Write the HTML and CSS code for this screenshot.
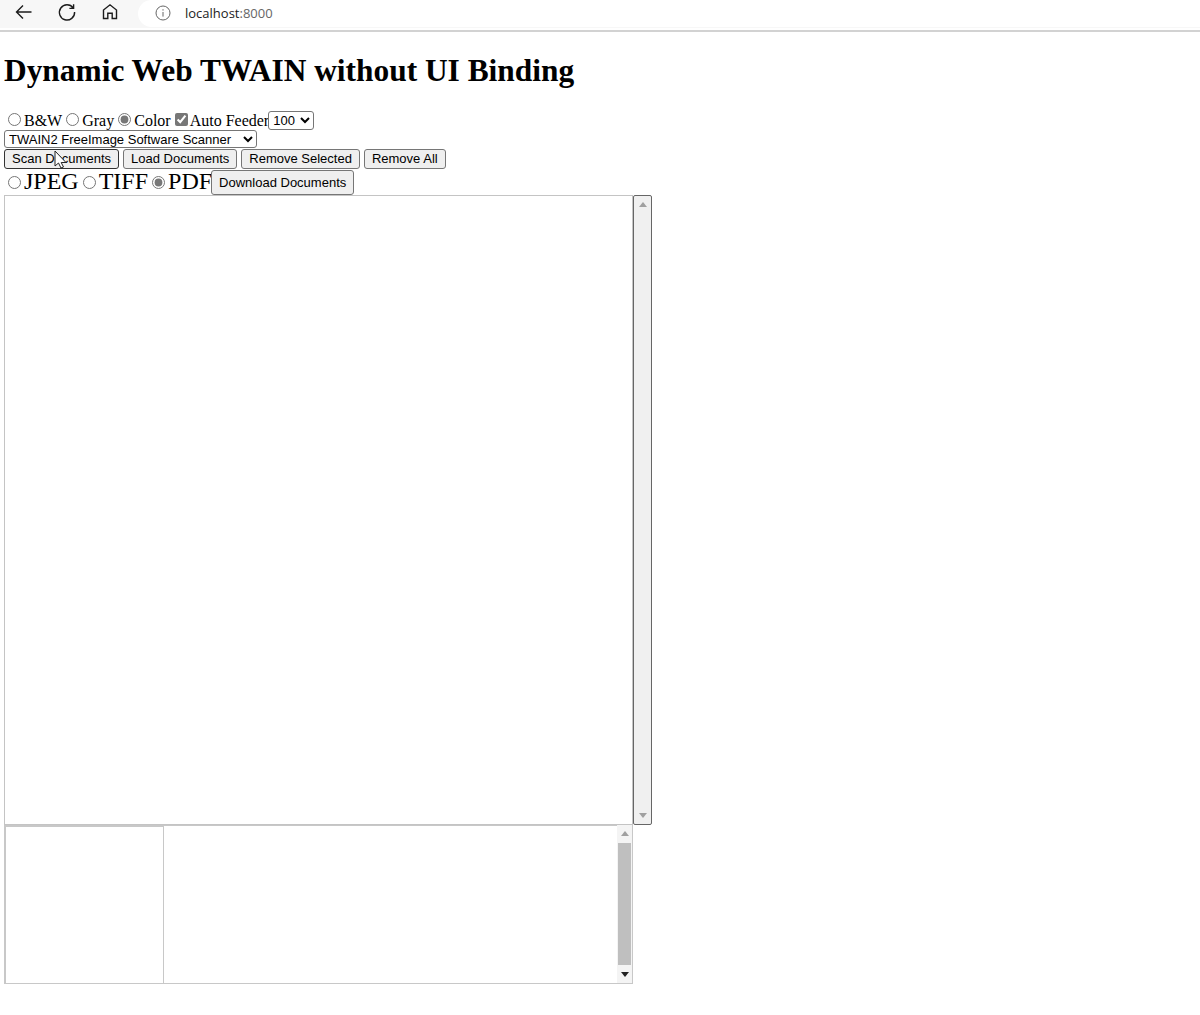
FILE: index.html
```html
<!DOCTYPE html>
<html lang="en">
<head>
<meta charset="utf-8">
<title>Dynamic Web TWAIN without UI Binding</title>
<link rel="stylesheet" href="styles.css">
</head>
<body>
<header class="browser-bar">
  <svg class="nav-icon back" viewBox="0 0 20 20"><path d="M17.5 10H2.5M9 3.5 2.5 10 9 16.5"/></svg>
  <svg class="nav-icon reload" viewBox="0 0 20 20"><path d="M16.2 6A7.6 7.6 0 1 0 17.6 10M16.6 2.2V6.4H12.4"/></svg>
  <svg class="nav-icon home" viewBox="0 0 20 20"><path d="M3.5 16.5V8L10 2.8 16.5 8V16.5H12.2V11.2H7.8V16.5Z"/></svg>
  <div class="address">
    <svg class="info" viewBox="0 0 16 16"><circle cx="8" cy="8" r="7"/><path d="M8 7v4.6M8 4.2v1.4"/></svg>
    <span class="host">localhost</span><span class="port">:8000</span>
  </div>
</header>
<main class="page">
  <h1>Dynamic Web TWAIN without UI Binding</h1>
  <div class="row options">
    <label><input type="radio" name="mode">B&amp;W</label>
    <label><input type="radio" name="mode">Gray</label>
    <label><input type="radio" name="mode" checked>Color</label>
    <label class="feeder"><input type="checkbox" checked>Auto Feeder</label><select class="count"><option>100</option></select>
  </div>
  <div class="row source"><select class="scanner"><option>TWAIN2 FreeImage Software Scanner</option></select></div>
  <div class="row actions">
    <button class="focused">Scan Documents</button>
    <button>Load Documents</button>
    <button>Remove Selected</button>
    <button>Remove All</button>
  </div>
  <div class="row formats">
    <label><input type="radio" name="fmt">JPEG</label>
    <label><input type="radio" name="fmt">TIFF</label>
    <label><input type="radio" name="fmt" checked>PDF</label><button>Download Documents</button>
  </div>
  <section class="viewer">
    <div class="canvas"></div>
    <div class="scrollbar">
      <svg class="arrow" viewBox="0 0 8 5"><path d="M4 0 8 5H0Z"/></svg>
      <svg class="arrow" viewBox="0 0 8 5"><path d="M0 0H8L4 5Z"/></svg>
    </div>
  </section>
  <section class="thumbs">
    <div class="thumb"></div>
    <div class="thumb-space"></div>
    <div class="thumb-scroll">
      <svg class="arrow" viewBox="0 0 8 5"><path d="M4 0 8 5H0Z"/></svg>
      <div class="thumb-handle"></div>
      <svg class="arrow dark" viewBox="0 0 8 5"><path d="M0 0H8L4 5Z"/></svg>
    </div>
  </section>
</main>
<svg class="cursor" viewBox="0 0 13 19"><path d="M1 1V16L4.5 13 7 18 9.5 17 7.2 12.5H12Z"/></svg>
</body>
</html>
```
FILE: styles.css
```css
html, body { margin: 0; padding: 0; background: #fff; }
body { font-family: "Liberation Serif", serif; color: #000; height: 1015px; overflow: hidden; position: relative; }

.browser-bar { height: 24px; padding-bottom: 6px; background: linear-gradient(#f7f7f7 28px, #fff 28px); border-bottom: 2px solid #d2d2d2; display: flex; align-items: center; }
.nav-icon { width: 20px; height: 20px; fill: none; stroke: #1c1c1c; stroke-width: 1.4; flex: none; }
.back { margin-left: 14px; }
.reload { margin-left: 23px; }
.home { margin-left: 23px; }
.address { margin-left: 18px; flex: 1; align-self: flex-start; height: 27px; padding-bottom: 2px; box-sizing: border-box; background: #fff; border-radius: 14px 0 0 14px; display: flex; align-items: center; padding-left: 17px; font: 13px "Open Sans", sans-serif; }
.info { width: 16px; height: 16px; fill: none; stroke: #666; stroke-width: 1; margin-right: 14px; }
.host { color: #222; }
.port { color: #666; }

.page { padding-left: 4px; }
h1 { font-size: 31.4px; line-height: 37px; font-weight: bold; margin: 20px 0 21px; }

.row { display: flex; align-items: center; white-space: pre; }
.row label { display: flex; align-items: center; }
.row input { margin: 0 3px 0 4px; accent-color: #777; }
.options { height: 20px; font-size: 16px; }
.options label { padding-top: 2px; }
.options input { margin-bottom: 4px; }
.options .feeder input { margin-right: 2px; }
.count { margin-left: -1px; }
.source { height: 18px; }
.actions { height: 21px; gap: 4px; }
.formats { height: 25px; margin-top: 1px; font-size: 24px; }
.formats label { padding-bottom: 2px; }
.formats input { margin-top: 2px; }
.formats button { height: 25px; margin-left: -1px; }

select { font: 13px "Liberation Sans", sans-serif; background: #fff; color: #000; border: 1px solid #767676; border-radius: 3px; padding: 0; }
.count { width: 46px; height: 19px; }
.scanner { width: 253px; height: 18px; }
button { font: 13px "Liberation Sans", sans-serif; height: 20px; padding: 0 7px; background: #efefef; color: #000; border: 1px solid #767676; border-radius: 3px; }
button.focused { border-color: #333; }

.viewer { display: flex; width: 648px; height: 630px; }
.canvas { width: 627px; border: 1px solid #c4c4c4; flex: none; }
.scrollbar { width: 19px; flex: none; background: #f0f0f0; border: 1px solid #666; border-radius: 2px; display: flex; flex-direction: column; justify-content: space-between; align-items: center; padding: 6px 0; box-sizing: border-box; }
.arrow { width: 8px; height: 5px; fill: #a0a0a0; flex: none; }
.arrow.dark { fill: #222; }

.thumbs { display: flex; width: 629px; height: 159px; box-sizing: border-box; border: 1px solid #c8c8c8; border-top: 0; }
.thumb { width: 159px; border: 1px solid #c8c8c8; border-width: 2px 1px 0 1px; box-sizing: border-box; flex: none; }
.thumb-space { flex: 1; border-top: 1px solid #c8c8c8; }
.thumb-scroll { width: 15px; flex: none; background: #f4f4f4; display: flex; flex-direction: column; align-items: center; padding: 6px 0; box-sizing: border-box; }
.thumb-handle { width: 13px; flex: 1; background: #bfbfbf; margin: 7px 0 7px; }

.cursor { position: absolute; left: 54px; top: 150px; width: 13px; height: 19px; fill: #fff; stroke: #222; stroke-width: 1; }
```
